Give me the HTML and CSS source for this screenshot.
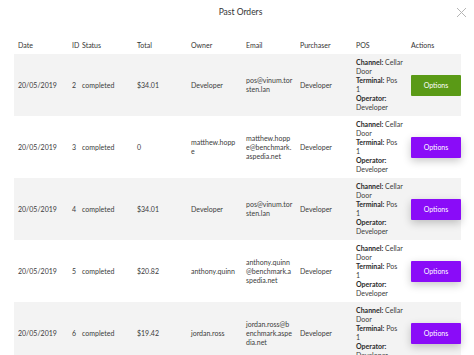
FILE: index.html
```html
<!DOCTYPE html>
<html>
<head>
<meta charset="utf-8">
<link rel="stylesheet" href="styles.css">
</head>
<body>
<div class="modal">
  <div class="modal-head">
    <span></span>
    <h1 class="title">Past Orders</h1>
    <span class="close"><svg width="11" height="11" viewBox="0 0 11 11"><path d="M1 1L10 10M10 1L1 10" stroke="#b5b5b5" stroke-width="1" fill="none"/></svg></span>
  </div>
  <table class="orders">
    <colgroup>
      <col class="c-date"><col class="c-id"><col class="c-status"><col class="c-total"><col class="c-owner"><col class="c-email"><col class="c-purch"><col class="c-pos"><col class="c-act">
    </colgroup>
    <thead>
      <tr><th>Date</th><th>ID</th><th>Status</th><th>Total</th><th>Owner</th><th>Email</th><th>Purchaser</th><th>POS</th><th>Actions</th></tr>
    </thead>
    <tbody>
      <tr>
        <td>20/05/2019</td><td class="id">2</td><td>completed</td><td>$34.01</td><td>Developer</td><td>pos@vinum.tor<br>sten.lan</td><td>Developer</td>
        <td class="pos"><b>Channel:</b> Cellar<br>Door<br><b>Terminal:</b> Pos<br>1<br><b>Operator:</b><br>Developer</td>
        <td><button class="btn green">Options</button></td>
      </tr>
      <tr>
        <td>20/05/2019</td><td class="id">3</td><td>completed</td><td>0</td><td>matthew.hopp<br>e</td><td>matthew.hopp<br>e@benchmark.<br>aspedia.net</td><td>Developer</td>
        <td class="pos"><b>Channel:</b> Cellar<br>Door<br><b>Terminal:</b> Pos<br>1<br><b>Operator:</b><br>Developer</td>
        <td><button class="btn purple">Options</button></td>
      </tr>
      <tr>
        <td>20/05/2019</td><td class="id">4</td><td>completed</td><td>$34.01</td><td>Developer</td><td>pos@vinum.tor<br>sten.lan</td><td>Developer</td>
        <td class="pos"><b>Channel:</b> Cellar<br>Door<br><b>Terminal:</b> Pos<br>1<br><b>Operator:</b><br>Developer</td>
        <td><button class="btn purple">Options</button></td>
      </tr>
      <tr>
        <td>20/05/2019</td><td class="id">5</td><td>completed</td><td>$20.82</td><td>anthony.quinn</td><td>anthony.quinn<br>@benchmark.a<br>spedia.net</td><td>Developer</td>
        <td class="pos"><b>Channel:</b> Cellar<br>Door<br><b>Terminal:</b> Pos<br>1<br><b>Operator:</b><br>Developer</td>
        <td><button class="btn purple">Options</button></td>
      </tr>
      <tr>
        <td>20/05/2019</td><td class="id">6</td><td>completed</td><td>$19.42</td><td>jordan.ross</td><td>jordan.ross@b<br>enchmark.aspe<br>dia.net</td><td>Developer</td>
        <td class="pos"><b>Channel:</b> Cellar<br>Door<br><b>Terminal:</b> Pos<br>1<br><b>Operator:</b><br>Developer</td>
        <td><button class="btn purple">Options</button></td>
      </tr>
    </tbody>
  </table>
</div>
</body>
</html>
```
FILE: styles.css
```css
html, body {
  margin: 0;
  padding: 0;
  background: #fff;
  height: 355px;
  overflow: hidden;
}
body {
  font-family: "Lato", "Noto Sans", sans-serif;
  color: #3b3b3b;
  font-size: 7px;
}
.modal {
  width: 474px;
}
.modal-head {
  display: grid;
  grid-template-columns: 1fr auto 1fr;
  align-items: center;
  height: 24px;
  padding: 0 7px 0 14px;
}
.title {
  margin: 0;
  font-size: 8.5px;
  font-weight: 400;
  color: #333;
}
.close {
  justify-self: end;
  display: flex;
  margin-top: 1px;
}
.orders {
  margin: 11px 0 0 14px;
  width: 447px;
  border-collapse: collapse;
  table-layout: fixed;
}
.c-date { width: 54px; }
.c-id { width: 10px; }
.c-status { width: 55px; }
.c-total { width: 54px; }
.c-owner { width: 55px; }
.c-email { width: 54px; }
.c-purch { width: 56px; }
.c-pos { width: 55px; }
.c-act { width: 54px; }
th {
  text-align: left;
  font-weight: 400;
  color: #333;
  height: 19px;
  padding: 0 4px;
  vertical-align: middle;
  white-space: nowrap;
}
th:nth-child(2), td.id {
  padding: 0 0 0 4px;
}
td {
  height: 62px;
  box-sizing: border-box;
  padding: 2px 4px;
  vertical-align: middle;
  line-height: 9px;
  white-space: nowrap;
}
td.pos b {
  font-weight: 700;
  color: #2b2b2b;
}
tbody tr:nth-child(odd) td {
  background: #f3f3f3;
}
.btn {
  display: block;
  width: 50px;
  height: 21px;
  border: none;
  border-radius: 1px;
  color: #fff;
  font-family: inherit;
  font-size: 7px;
  padding: 0;
}
.btn.green {
  background: #5a9a16;
}
.btn.purple {
  background: #8a0cf8;
  box-shadow: 0 3px 8px rgba(0, 0, 0, 0.22);
}
```
